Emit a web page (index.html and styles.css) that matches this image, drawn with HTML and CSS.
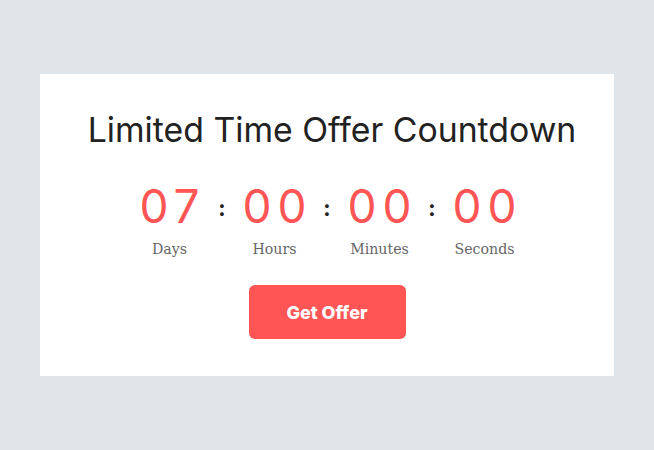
FILE: index.html
```html
<!DOCTYPE html>
<html lang="en">
<head>
<meta charset="utf-8">
<title>Limited Time Offer Countdown</title>
<link rel="stylesheet" href="styles.css">
</head>
<body>
  <main class="card">
    <h1 class="title">Limited Time Offer Countdown</h1>
    <div class="countdown">
      <div class="unit">
        <span class="value">07</span>
        <span class="label">Days</span>
      </div>
      <span class="sep">:</span>
      <div class="unit">
        <span class="value">00</span>
        <span class="label">Hours</span>
      </div>
      <span class="sep">:</span>
      <div class="unit">
        <span class="value">00</span>
        <span class="label">Minutes</span>
      </div>
      <span class="sep">:</span>
      <div class="unit">
        <span class="value">00</span>
        <span class="label">Seconds</span>
      </div>
    </div>
    <button class="cta" type="button">Get Offer</button>
  </main>
</body>
</html>
```

FILE: styles.css
```css
html, body {
  margin: 0;
  padding: 0;
}

body {
  background: #e0e5ea;
  min-height: 100vh;
  display: flex;
  align-items: center;
  justify-content: center;
  font-family: Inter, "Noto Sans", sans-serif;
}

.card {
  width: 574px;
  height: 302px;
  box-sizing: border-box;
  background: #ffffff;
  display: flex;
  flex-direction: column;
  align-items: center;
  padding-top: 36px;
}

.title {
  margin: 0 0 0 10px;
  font-size: 33.8px;
  line-height: 40px;
  font-weight: 400;
  color: #222222;
}

.countdown {
  display: flex;
  align-items: flex-start;
  margin-top: 32px;
}

.unit {
  width: 80px;
  display: flex;
  flex-direction: column;
  align-items: center;
}

.value {
  font-size: 46px;
  line-height: 48px;
  font-weight: 400;
  letter-spacing: 6px;
  margin-right: -6px;
  color: #ff5555;
}

.label {
  font-family: "DejaVu Serif", "Liberation Serif", serif;
  font-size: 14.2px;
  line-height: 20px;
  color: #666666;
  margin-top: 9px;
}

.sep {
  width: 25px;
  text-align: center;
  font-size: 22px;
  font-weight: 700;
  line-height: 52px;
  color: #222222;
}

.cta {
  margin-top: 26px;
  width: 157px;
  height: 54px;
  border: 0;
  border-radius: 6px;
  background: #ff5555;
  color: #ffffff;
  font-family: Inter, "Noto Sans", sans-serif;
  font-size: 18px;
  font-weight: 800;
  cursor: pointer;
}
```
